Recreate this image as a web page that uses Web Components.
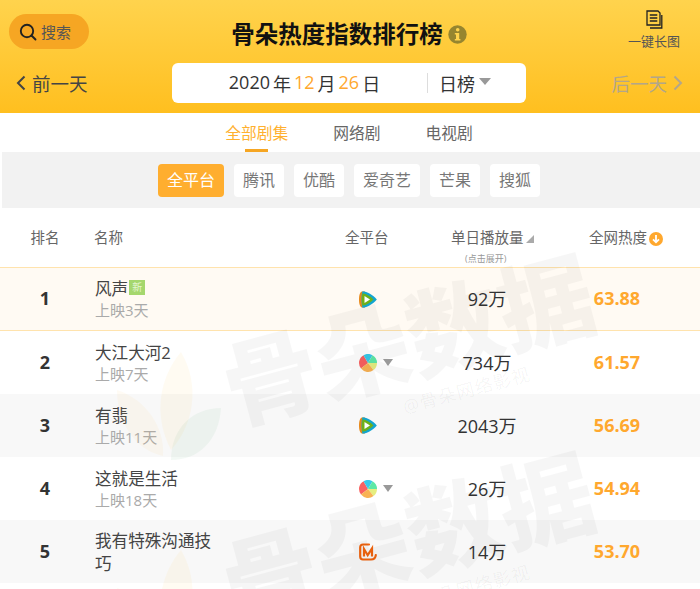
<!DOCTYPE html>
<html lang="zh">
<head>
<meta charset="utf-8">
<title>骨朵热度指数排行榜</title>
<style>
html,body{margin:0;padding:0;background:#fff;}
body{width:700px;height:589px;overflow:hidden;font-family:"Open Sans","Noto Sans CJK SC",sans-serif;}
</style>
</head>
<body>
<gd-header></gd-header>
<gd-tabs></gd-tabs>
<gd-filter></gd-filter>
<gd-table>
    <gd-row rank="1" name="风声" sub="上映3天" platform="tencent" views="92万" score="63.88" isnew first></gd-row>
    <gd-row rank="2" name="大江大河2" sub="上映7天" platform="all" views="734万" score="61.57"></gd-row>
    <gd-row rank="3" name="有翡" sub="上映11天" platform="tencent" views="2043万" score="56.69" alt></gd-row>
    <gd-row rank="4" name="这就是生活" sub="上映18天" platform="all" views="26万" score="54.94"></gd-row>
    <gd-row rank="5" name="我有特殊沟通技巧" platform="mango" views="14万" score="53.70" alt></gd-row>
</gd-table>
<script>
class GdHeader extends HTMLElement {
    constructor(){
        super()
        this.attachShadow({mode:'open'})
        this.shadowRoot.innerHTML=`
        <style>
        :host{display:flex;flex-direction:column;height:113px;box-sizing:border-box;padding:0 17px 0 9px;
            background:linear-gradient(#ffd34d,#ffbf1f);color:#333;}
        .top{display:flex;align-items:flex-start;justify-content:space-between;height:63px;}
        .search{display:flex;align-items:center;gap:4px;width:80px;height:35px;margin-top:14px;box-sizing:border-box;padding-left:10px;
            border-radius:18px;background:#f6a623;color:#555;font-size:15px;}
        .title{display:flex;align-items:center;gap:5px;margin-top:18px;margin-left:-18px;font-size:23.500px;line-height:32px;font-weight:700;color:#111;}
        .long{display:flex;flex-direction:column;align-items:center;width:54px;margin-top:10px;margin-right:2px;font-size:13px;line-height:17px;color:#555;}
        .long svg{margin-bottom:4px;}
        .bottom{display:flex;align-items:center;justify-content:space-between;height:40px;}
        .day{display:flex;align-items:center;gap:6px;font-size:18.500px;color:#444;padding-left:7px;}
        .day.next{color:#b3a68a;padding:0;}
        .picker{display:flex;align-items:center;width:354px;height:40px;margin-left:-1px;box-sizing:border-box;border-radius:6px;background:#fff;
            font-size:18px;color:#333;}
        .date{display:flex;justify-content:center;gap:3px;width:255px;padding-left:10px;box-sizing:border-box;}
        .date b{font-weight:400;color:#ffa82e;}
        .kind{display:flex;align-items:center;gap:4px;height:20px;padding-left:11px;border-left:1px solid #ddd;}
        .tri{width:0;height:0;border:6px solid transparent;border-top:7px solid #999;border-bottom:0;margin-top:-3px;}
        </style>
        <div class="top">
            <div class="search">
                <svg width="18" height="18" viewBox="0 0 18 18" fill="none" stroke="#222" stroke-width="1.900"><circle cx="8" cy="8" r="6.200"/><path d="M12.500 12.500l4 4" stroke-linecap="round"/></svg>
                <span>搜索</span>
            </div>
            <div class="title">
                <span>骨朵热度指数排行榜</span>
                <svg width="19" height="19" viewBox="0 0 19 19"><circle cx="9.500" cy="9.500" r="9.200" fill="#96852f"/><circle cx="9.700" cy="4.800" r="1.800" fill="#ffd34d"/><path d="M6.800 8h4.400v6h1.200v1.600H6.800V14H8V9.600H6.800z" fill="#ffd34d"/></svg>
            </div>
            <div class="long">
                <svg width="17" height="19" viewBox="0 0 17 19" fill="none" stroke="#222" stroke-width="1.300"><path d="M1 1h11l2 2v12H1z"/><path d="M15.800 5v13H4"/><path d="M3.800 5h7.500M3.800 8h7.500M3.800 11h7.500"/></svg>
                <span>一键长图</span>
            </div>
        </div>
        <div class="bottom">
            <div class="day">
                <svg width="10" height="16" viewBox="0 0 10 16" fill="none" stroke="#444" stroke-width="2"><path d="M8.500 1.500L2 8l6.500 6.500"/></svg>
                <span>前一天</span>
            </div>
            <div class="picker">
                <div class="date"><span>2020</span><span>年</span><b>12</b><span>月</span><b>26</b><span>日</span></div>
                <div class="kind"><span>日榜</span><i class="tri"></i></div>
            </div>
            <div class="day next">
                <span>后一天</span>
                <svg width="10" height="16" viewBox="0 0 10 16" fill="none" stroke="#b3a68a" stroke-width="2"><path d="M1.500 1.500L8 8l-6.500 6.500"/></svg>
            </div>
        </div>`
    }
}

class GdTabs extends HTMLElement {
    constructor(){
        super()
        this.attachShadow({mode:'open'})
        this.shadowRoot.innerHTML=`
        <style>
        :host{display:flex;justify-content:center;gap:45px;height:39px;padding-right:2px;box-sizing:border-box;background:#fff;font-size:15.750px;color:#666;}
        span{position:relative;line-height:41px;}
        .on{color:#ffb12f;}
        .on::after{content:"";position:absolute;left:20px;right:20px;bottom:0;height:3px;background:#f6a623;}
        </style>
        <span class="on">全部剧集</span><span>网络剧</span><span>电视剧</span>`
    }
}

class GdFilter extends HTMLElement {
    constructor(){
        super()
        this.attachShadow({mode:'open'})
        this.shadowRoot.innerHTML=`
        <style>
        :host{display:flex;justify-content:center;align-items:center;gap:10px;height:56px;margin-left:2px;padding-right:4px;background:#f2f2f2;}
        span{height:33px;line-height:33px;padding:0 9px;border-radius:4px;background:#fff;color:#777;font-size:16px;}
        .on{background:#ffae2f;color:#fff;}
        </style>
        <span class="on">全平台</span><span>腾讯</span><span>优酷</span><span>爱奇艺</span><span>芒果</span><span>搜狐</span>`
    }
}

class GdIcon extends HTMLElement {
    constructor(){
        super()
        this.attachShadow({mode:'open'})
    }
    connectedCallback(){
        const type=this.getAttribute('type')
        let svg=''
        if(type==='tencent'){
            svg=`<svg width="18" height="17" viewBox="0 0 18 17">
                <path d="M3 .5C1 1 0 4 0 8.500S1 16 3 16.500h3V.5z" fill="#e8891a"/>
                <path d="M3.500.3C8 .3 14 4 17.800 8.500 14 13 8 16.700 3.500 16.700 2.200 13 2.200 4 3.500.3z" fill="#12a5d0"/>
                <path d="M3.500 2.200C7.500 2.800 11.500 5.300 14.500 8.500 11.500 11.700 7.500 14.200 3.500 14.800 2.700 11.500 2.700 5.500 3.500 2.200z" fill="#6fb01a"/>
                <path d="M5.500 5L11 8.500 5.500 12z" fill="#fff"/></svg>`
        }else if(type==='all'){
            svg=`<svg width="18" height="18" viewBox="0 0 18 18">
                <path d="M9 9L4.500 1.200A9 9 0 0 0 2 14.600z" fill="#f96060"/>
                <path d="M9 9L4.500 1.200A9 9 0 0 1 13.500 1.200z" fill="#38c9e8"/>
                <path d="M9 9L13.500 1.200A9 9 0 0 1 18 9z" fill="#5de8a6"/>
                <path d="M9 9H18A9 9 0 0 1 14.500 16.100z" fill="#e5ee80"/>
                <path d="M9 9L14.500 16.100A9 9 0 0 1 2 14.600z" fill="#f8b254"/></svg><i></i>`
        }else{
            svg=`<svg width="18" height="18" viewBox="0 0 18 18" fill="none">
                <path d="M4 1.500h6M4 1.500C2.300 1.500 1.200 2.700 1.200 4.500v9c0 1.800 1.100 3 2.800 3h8c2.800 0 4.600-1.800 4.800-4.500" stroke="#f0640f" stroke-width="2.200" stroke-linecap="round"/>
                <path d="M5 13.500V6l3.700 6.200L13 5.500v8" stroke="#f0640f" stroke-width="2.200"/></svg>`
        }
        this.shadowRoot.innerHTML=`
        <style>
        :host{display:inline-flex;align-items:center;gap:6px;}
        i{width:0;height:0;border:5.500px solid transparent;border-top:7px solid #999;border-bottom:0;}
        svg{display:block;}
        </style>${svg}`
    }
}

const rowTemplate = document.createElement('template')
rowTemplate.innerHTML=`
    <style>
    :host{display:grid;grid-template-columns:90px 250px 87px 120px 140px;align-items:center;height:63px;color:#333;}
    :host([first]){height:64px;box-sizing:border-box;background:#fffaf3;border-top:1px solid #ffe3ad;border-bottom:1px solid #ffe3ad;}
    :host([alt]){background:#f8f8f8;}
    .rank,.views,.score{padding-bottom:2px;text-align:center;font-size:18px;}
    .rank{font-weight:700;}
    .cell-name{padding-left:5px;}
    .name{max-width:120px;font-size:16.600px;line-height:23px;color:#444;}
    .tag{display:inline-block;vertical-align:top;width:16px;height:15px;margin:3px 0 0 1px;background:#a5d76e;color:#e4f5d0;font-size:10px;line-height:15px;text-align:center;}
    .sub{font-size:15px;line-height:21px;color:#aaa;}
    .cell-icon{padding-left:19px;display:flex;}
    .score{font-weight:700;color:#ffa82e;}
    </style>
    <div class="rank"></div>
    <div class="cell-name"><div class="name"></div><div class="sub"></div></div>
    <div class="cell-icon"></div>
    <div class="views"></div>
    <div class="score"></div>
`
class GdRow extends HTMLElement {
    constructor(){
        super()
        this.attachShadow({mode:'open'})
        this.shadowRoot.appendChild(rowTemplate.content.cloneNode(true))
    }
    connectedCallback(){
        const root=this.shadowRoot
        root.querySelector('.rank').textContent=this.getAttribute('rank')
        const name=root.querySelector('.name')
        name.textContent=this.getAttribute('name')
        if(this.hasAttribute('isnew')){
            const tag=document.createElement('span')
            tag.className='tag'
            tag.textContent='新'
            name.appendChild(tag)
        }
        const sub=root.querySelector('.sub')
        if(this.getAttribute('sub')) sub.textContent=this.getAttribute('sub')
        else sub.remove()
        const icon=document.createElement('gd-icon')
        icon.setAttribute('type',this.getAttribute('platform'))
        root.querySelector('.cell-icon').appendChild(icon)
        root.querySelector('.views').textContent=this.getAttribute('views')
        root.querySelector('.score').textContent=this.getAttribute('score')
    }
}

class GdWatermark extends HTMLElement {
    constructor(){
        super()
        this.attachShadow({mode:'open'})
        this.shadowRoot.innerHTML=`
        <style>
        :host{position:absolute;left:0;top:0;width:700px;height:381px;overflow:hidden;pointer-events:none;display:block;}
        .mark{position:relative;height:198px;}
        .big,.small,svg{position:absolute;white-space:nowrap;}
        .big{left:217px;top:77px;font-size:95px;line-height:100px;font-weight:900;color:rgba(0,0,0,.035);
            font-family:"Noto Sans CJK SC",sans-serif;transform:rotate(-15deg);}
        .small{left:401px;top:170px;font-size:18px;line-height:24px;letter-spacing:1px;color:rgba(0,0,0,.045);transform:rotate(-15deg);}
        svg{left:115px;top:142px;}
        </style>
        ${[0,1].map(()=>`<div class="mark">
            <svg width="110" height="112" viewBox="0 0 110 112">
                <path d="M66 2C44 28 38 66 56 100 78 76 86 36 66 2z" fill="rgba(255,195,70,.07)"/>
                <path d="M2 40C2 72 20 100 48 106 50 78 32 50 2 40z" fill="rgba(255,195,70,.06)"/>
                <path d="M106 58C78 58 56 78 56 110 84 110 104 90 106 58z" fill="rgba(90,170,110,.07)"/>
            </svg>
            <div class="big">骨朵数据</div>
            <div class="small">@骨朵网络影视</div>
        </div>`).join('')}`
    }
}

class GdTable extends HTMLElement {
    constructor(){
        super()
        this.attachShadow({mode:'open'})
        this.shadowRoot.innerHTML=`
        <style>
        :host{display:block;position:relative;}
        .head{display:grid;grid-template-columns:90px 250px 87px 120px 140px;height:59px;color:#666;font-size:14.500px;}
        .head>div{padding-top:20px;line-height:20px;}
        .c{text-align:center;}
        .plat{padding-left:5px;}
        .nm{padding-left:4px;}
        .v{position:relative;padding-left:24px;box-sizing:border-box;}
        .v i{display:inline-block;width:0;height:0;border-style:solid;border-width:0 0 8px 8px;border-color:transparent transparent #aaa transparent;margin-left:2px;}
        .hint{position:absolute;left:38px;top:45px;font-size:9px;line-height:12px;color:#999;white-space:nowrap;}
        .hot{display:flex;align-items:flex-start;gap:2px;padding-left:42px;}
        .hot svg{margin-top:4px;}
        </style>
        <div class="head">
            <div class="c">排名</div>
            <div class="nm">名称</div>
            <div class="plat">全平台</div>
            <div class="v">单日播放量<i></i><div class="hint">(点击展开)</div></div>
            <div class="hot"><span>全网热度</span>
                <svg width="14" height="14" viewBox="0 0 14 14"><circle cx="7" cy="7" r="7" fill="#ffa82e"/><path d="M7 3v7M4 7.300L7 10.300 10 7.300" fill="none" stroke="#fff" stroke-width="1.800"/></svg>
            </div>
        </div>
        <slot></slot>
        <gd-watermark></gd-watermark>`
    }
}

window.customElements.define('gd-header',GdHeader)
window.customElements.define('gd-tabs',GdTabs)
window.customElements.define('gd-filter',GdFilter)
window.customElements.define('gd-icon',GdIcon)
window.customElements.define('gd-row',GdRow)
window.customElements.define('gd-watermark',GdWatermark)
window.customElements.define('gd-table',GdTable)
</script>
</body>
</html>
